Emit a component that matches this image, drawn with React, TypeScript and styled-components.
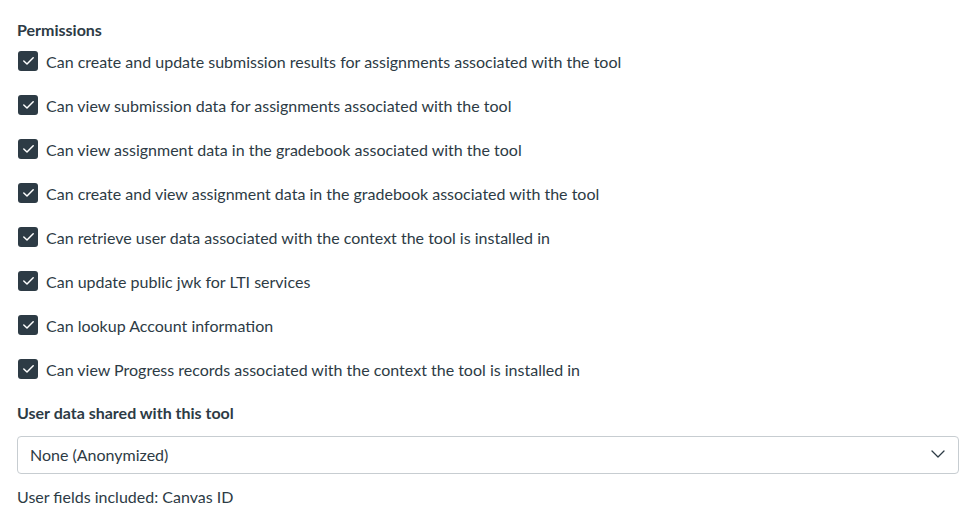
import styled, { createGlobalStyle } from "styled-components";

const GlobalStyle = createGlobalStyle`
  body {
    margin: 0;
    background: #ffffff;
    font-family: Lato, "Noto Sans", sans-serif;
    color: #2d3b45;
  }
`;

const StyledPage = styled.div`
  padding: 18px 15px 0 17px;

  .section-title {
    margin: 0;
    font-size: 16px;
    line-height: 24px;
    font-weight: 700;
  }

  .permissions {
    display: flex;
    flex-direction: column;
    gap: 20px;
    margin: 7px 0 20px;
    padding: 0;
    list-style: none;
  }

  .hint {
    margin: 11px 0 0;
    font-size: 16px;
    line-height: 24px;
  }
`;

const CheckRow = styled.li`
  display: flex;
  align-items: center;
  gap: 8px;
  height: 24px;
  font-size: 16px;
`;

const Box = styled.span`
  display: flex;
  align-items: center;
  justify-content: center;
  width: 20px;
  height: 20px;
  margin-left: 1px;
  border-radius: 3px;
  background: #2d3b45;
  flex-shrink: 0;
`;

const Select = styled.div`
  display: flex;
  align-items: center;
  justify-content: space-between;
  height: 38px;
  margin-top: 11px;
  padding: 0 13px 2px 12px;
  border: 1px solid #c7cdd1;
  border-radius: 4px;
  font-size: 16px;
  box-sizing: border-box;
`;

const permissions = [
  "Can create and update submission results for assignments associated with the tool",
  "Can view submission data for assignments associated with the tool",
  "Can view assignment data in the gradebook associated with the tool",
  "Can create and view assignment data in the gradebook associated with the tool",
  "Can retrieve user data associated with the context the tool is installed in",
  "Can update public jwk for LTI services",
  "Can lookup Account information",
  "Can view Progress records associated with the context the tool is installed in",
];

const Check = () => (
  <svg width="13" height="12" viewBox="0 0 13 12" fill="none">
    <path d="M1.8 6 L5 9 L11.2 2.8" stroke="#ffffff" strokeWidth="1.5" strokeLinecap="round" strokeLinejoin="round" />
  </svg>
);

const Chevron = () => (
  <svg width="14" height="8" viewBox="0 0 14 8" fill="none">
    <path d="M1 1 L7 7 L13 1" stroke="#2d3b45" strokeWidth="1.3" strokeLinecap="round" strokeLinejoin="round" />
  </svg>
);

const App = () => {
  return (
    <StyledPage>
      <GlobalStyle />
      <h4 className="section-title">Permissions</h4>
      <ul className="permissions">
        {permissions.map((text) => (
          <CheckRow key={text}>
            <Box>
              <Check />
            </Box>
            {text}
          </CheckRow>
        ))}
      </ul>
      <h4 className="section-title">User data shared with this tool</h4>
      <Select>
        <span>None (Anonymized)</span>
        <Chevron />
      </Select>
      <p className="hint">User fields included: Canvas ID</p>
    </StyledPage>
  );
};

export default App;
